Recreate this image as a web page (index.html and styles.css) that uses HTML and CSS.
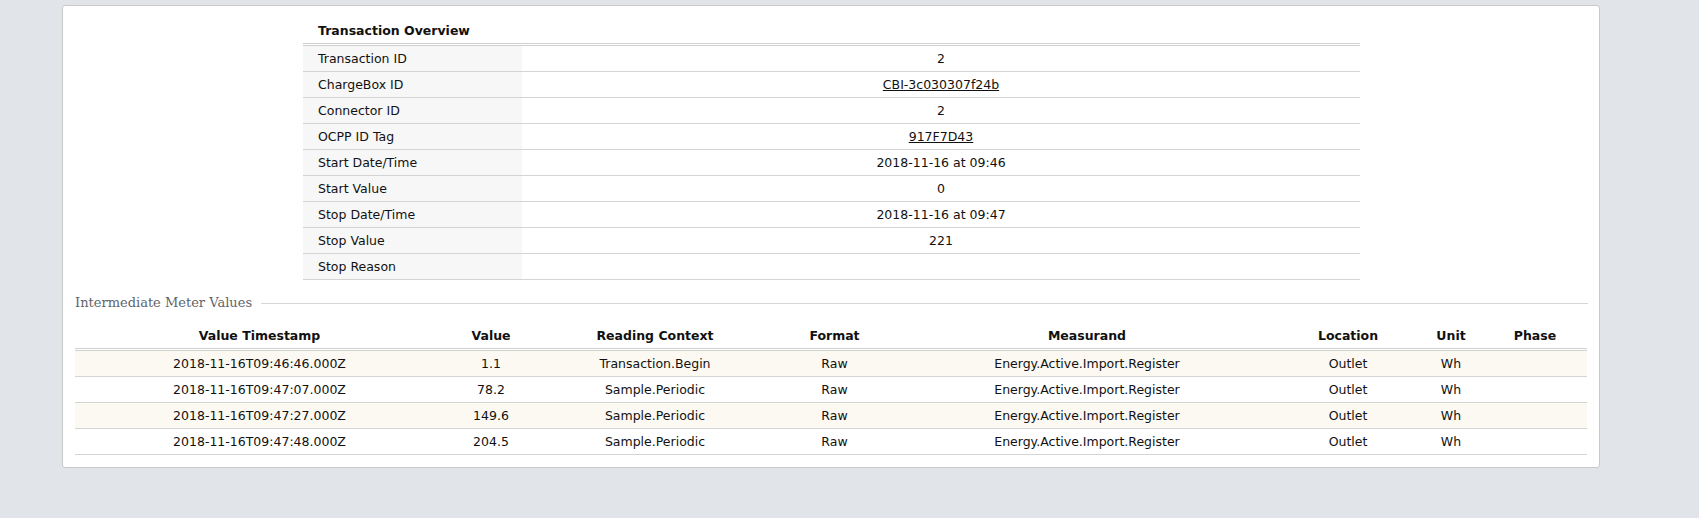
FILE: index.html
```html
<!DOCTYPE html>
<html>
<head>
<meta charset="utf-8">
<title>Transaction</title>
<link rel="stylesheet" href="styles.css">
</head>
<body>
<div class="page">
  <div class="panel">
    <table class="overview">
      <thead>
        <tr><th colspan="2">Transaction Overview</th></tr>
      </thead>
      <tbody>
        <tr><td class="label">Transaction ID</td><td class="value">2</td></tr>
        <tr><td class="label">ChargeBox ID</td><td class="value"><a href="#">CBI-3c030307f24b</a></td></tr>
        <tr><td class="label">Connector ID</td><td class="value">2</td></tr>
        <tr><td class="label">OCPP ID Tag</td><td class="value"><a href="#">917F7D43</a></td></tr>
        <tr><td class="label">Start Date/Time</td><td class="value">2018-11-16 at 09:46</td></tr>
        <tr><td class="label">Start Value</td><td class="value">0</td></tr>
        <tr><td class="label">Stop Date/Time</td><td class="value">2018-11-16 at 09:47</td></tr>
        <tr><td class="label">Stop Value</td><td class="value">221</td></tr>
        <tr><td class="label">Stop Reason</td><td class="value"></td></tr>
      </tbody>
    </table>

    <div class="section-title">Intermediate Meter Values</div>

    <table class="meters">
      <colgroup>
        <col class="c1"><col class="c2"><col class="c3"><col class="c4">
        <col class="c5"><col class="c6"><col class="c7"><col class="c8">
      </colgroup>
      <thead>
        <tr>
          <th>Value Timestamp</th><th>Value</th><th>Reading Context</th><th>Format</th>
          <th>Measurand</th><th>Location</th><th>Unit</th><th>Phase</th>
        </tr>
      </thead>
      <tbody>
        <tr><td>2018-11-16T09:46:46.000Z</td><td>1.1</td><td>Transaction.Begin</td><td>Raw</td><td>Energy.Active.Import.Register</td><td>Outlet</td><td>Wh</td><td></td></tr>
        <tr><td>2018-11-16T09:47:07.000Z</td><td>78.2</td><td>Sample.Periodic</td><td>Raw</td><td>Energy.Active.Import.Register</td><td>Outlet</td><td>Wh</td><td></td></tr>
        <tr><td>2018-11-16T09:47:27.000Z</td><td>149.6</td><td>Sample.Periodic</td><td>Raw</td><td>Energy.Active.Import.Register</td><td>Outlet</td><td>Wh</td><td></td></tr>
        <tr><td>2018-11-16T09:47:48.000Z</td><td>204.5</td><td>Sample.Periodic</td><td>Raw</td><td>Energy.Active.Import.Register</td><td>Outlet</td><td>Wh</td><td></td></tr>
      </tbody>
    </table>
  </div>
</div>
</body>
</html>
```

FILE: styles.css
```css
html, body {
  margin: 0;
  background: #e1e5e9;
}
body {
  font-family: "DejaVu Sans", Verdana, sans-serif;
  font-size: 12.5px;
  color: #111;
}
.page {
  padding: 5px 0 0 62px;
}
.panel {
  width: 1538px;
  box-sizing: border-box;
  background: #fff;
  border: 1px solid #c9c9c9;
  border-radius: 3px;
  padding: 11px 11px 12px 12px;
}
a {
  color: #111;
  text-decoration: underline;
}

/* overview */
.overview {
  width: 1057px;
  margin: 0 auto;
  border-collapse: collapse;
}
.overview th {
  text-align: left;
  font-weight: bold;
  padding: 0 0 0 15px;
  height: 26px;
  border-bottom: 3px double #d0d0d0;
}
.overview td {
  height: 25px;
  padding: 0;
  border-bottom: 1px solid #d4d4d4;
}
.overview .label {
  width: 204px;
  padding-left: 15px;
  background: #f7f7f7;
}
.overview .value {
  text-align: center;
}

/* section title */
.section-title {
  display: flex;
  align-items: center;
  gap: 9px;
  margin: 13px 0 9px;
  font-family: "DejaVu Serif", "Liberation Serif", serif;
  font-size: 13px;
  line-height: 20px;
  color: #5f646b;
}
.section-title::after {
  content: "";
  flex: 1;
  border-top: 1px solid #d6d6d6;
}

/* meters */
.meters {
  width: 1512px;
  table-layout: fixed;
  border-collapse: collapse;
}
.meters .c1 { width: 369px; }
.meters .c2 { width: 94px; }
.meters .c3 { width: 234px; }
.meters .c4 { width: 125px; }
.meters .c5 { width: 380px; }
.meters .c6 { width: 142px; }
.meters .c7 { width: 64px; }
.meters .c8 { width: 104px; }
.meters th {
  height: 26px;
  padding: 0;
  font-weight: bold;
  text-align: center;
  border-bottom: 3px double #d0d0d0;
}
.meters td {
  height: 25px;
  padding: 0;
  text-align: center;
  border-bottom: 1px solid #d4d4d4;
}
.meters tbody tr:nth-child(odd) td {
  background: #fcf9f2;
}
```
